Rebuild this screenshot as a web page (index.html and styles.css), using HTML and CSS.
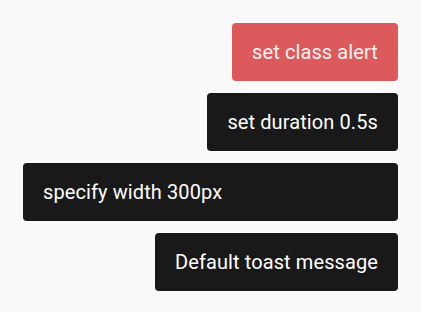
FILE: index.html
```html
<!DOCTYPE html>
<html>
<head>
<meta charset="utf-8">
<link rel="stylesheet" href="styles.css">
</head>
<body>
<div class="stack">
  <div class="toast alert">set class alert</div>
  <div class="toast">set duration 0.5s</div>
  <div class="toast wide">specify width 300px</div>
  <div class="toast">Default toast message</div>
</div>
</body>
</html>
```
FILE: styles.css
```css
html, body {
  margin: 0;
  background: #f9f9f9;
}
.stack {
  display: flex;
  flex-direction: column;
  align-items: flex-end;
  gap: 12px;
  padding: 23px 23px 0 0;
}
.toast {
  box-sizing: border-box;
  height: 58px;
  line-height: 58px;
  padding: 0 20px;
  border-radius: 4px;
  background: #191919;
  color: #fff;
  font-family: Roboto, "Liberation Sans", sans-serif;
  font-size: 20px;
  letter-spacing: 0.1px;
  white-space: nowrap;
}
.toast.alert {
  background: #dd5a5c;
  color: #fff3f3;
}
.toast.wide {
  width: 375px;
}
```
